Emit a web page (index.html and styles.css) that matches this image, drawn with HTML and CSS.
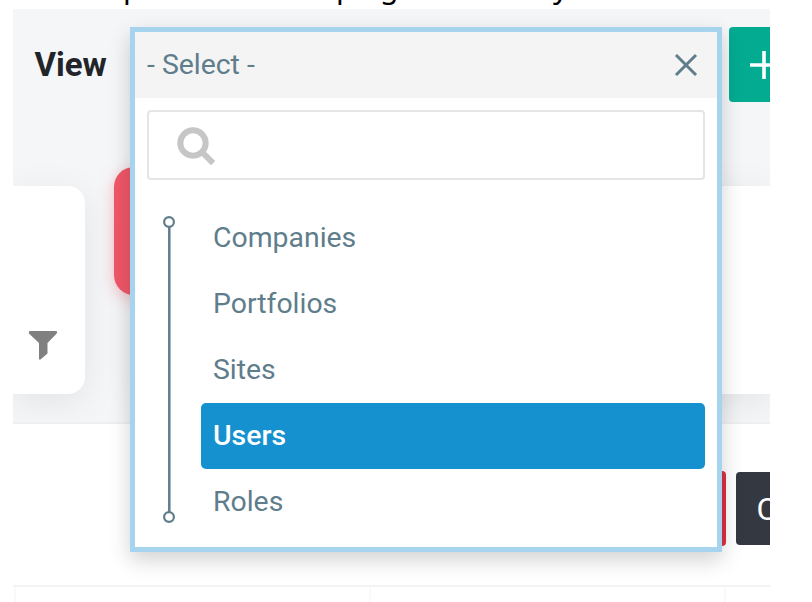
FILE: index.html
```html
<!DOCTYPE html>
<html lang="en">
<head>
<meta charset="utf-8">
<title>View</title>
<link rel="stylesheet" href="styles.css">
</head>
<body>
<p class="caption"><span class="c1">p</span><span class="c2">p</span><span class="c3">g</span><span class="c4">y</span></p>
<main class="app">
  <section class="dashboard">
    <header class="toolbar">
      <h1 class="title">View</h1>
      <button class="add" aria-label="Add"><svg width="28" height="28" viewBox="0 0 28 28"><path d="M14 0v28M0 14h28" stroke="#fff" stroke-width="3.6"/></svg></button>
    </header>
    <div class="cards">
      <div class="card filter-card">
        <svg class="funnel" width="30" height="31" viewBox="0 0 30 31"><path d="M1.500 1h27q1.500 1.200 0 2.700L19.500 13v10.500L12.500 29.500q-1.500 .6-1.500-1V13L1.200 3.700Q0 2 1.500 1z" fill="#808080"/></svg>
      </div>
      <div class="card main-card"><div class="accent"></div></div>
    </div>
  </section>
  <section class="content">
    <div class="actions"><button class="danger"></button><button class="dark">C</button></div>
    <div class="table"><div></div><div></div><div></div></div>
  </section>
  <div class="select">
    <div class="select-head"><span>- Select -</span>
      <svg width="24" height="24" viewBox="0 0 24 24"><path d="M2 2l20 20M22 2L2 22" stroke="#607d8b" stroke-width="3"/></svg>
    </div>
    <div class="select-body">
      <div class="search"><svg width="40" height="40" viewBox="0 0 40 40"><circle cx="17" cy="17" r="12.700" fill="none" stroke="#c6c6c6" stroke-width="6"/><path d="M26 26L35 35" stroke="#c6c6c6" stroke-width="6" stroke-linecap="square"/></svg></div>
      <div class="tree">
        <svg class="rail" width="14" height="310" viewBox="0 0 14 310"><g fill="#fff" stroke="#607d8b" stroke-width="2.200"><path d="M7.300 12v288" stroke-width="2.500"/><circle cx="7" cy="7" r="4.900"/><circle cx="7" cy="302" r="4.900"/></g></svg>
        <ul class="options"><li>Companies</li><li>Portfolios</li><li>Sites</li><li class="active">Users</li><li>Roles</li></ul>
      </div>
    </div>
  </div>
</main>
</body>
</html>
```
FILE: styles.css
```css
* { box-sizing: border-box; }
body { margin: 0; width: 812px; height: 602px; overflow: hidden; background: #fff; font-family: Roboto, sans-serif; }
button { border: 0; padding: 0; font: inherit; }
.caption { display: flex; margin: 0; height: 9px; padding-left: 123px; font: 30px/34px "Noto Sans", sans-serif; color: #000; }
.caption span { flex: none; margin-top: -30px; }
.c1 { width: 213px; }
.c2 { width: 44px; }
.c3 { width: 173px; }
.app { position: relative; margin-left: 13px; width: 757px; height: 593px; overflow: hidden; }
.dashboard { height: 415px; background: #f5f6f8; border-bottom: 2px solid #efeff0; overflow: hidden; }
.toolbar { display: flex; justify-content: space-between; height: 177px; padding: 18px 0 0 21.500px; }
.title { margin: 19px 0 0; font-size: 33px; line-height: 38px; font-weight: 700; color: #212529; }
.add { display: flex; align-items: center; width: 41.500px; height: 75px; padding-left: 21px; overflow: hidden; border-radius: 4px 0 0 4px; background: #03ab91; }
.add svg { flex: none; }
.cards { display: flex; gap: 55px; height: 208px; }
.card { background: #fff; box-shadow: 0 8px 36px rgba(0, 0, 0, .08); }
.filter-card { display: flex; align-items: flex-end; width: 72px; padding: 0 0 33.500px 14.500px; border-radius: 0 17px 17px 0; }
.main-card { position: relative; flex: 1; }
.accent { position: absolute; left: -26.500px; top: -19px; width: 128px; height: 128px; border-radius: 20px; background: #f05768; box-shadow: 0 4px 16px rgba(240, 87, 104, .35); }
.content { padding-top: 47.500px; }
.actions { display: flex; justify-content: flex-end; align-items: center; gap: 9.500px; height: 74px; }
.danger { width: 80px; height: 75px; border-radius: 4px; background: #dc3042; }
.dark { width: 34.500px; height: 73px; padding-left: 21px; overflow: hidden; border-radius: 4px 0 0 4px; background: #343841; color: #fff; font-size: 32px; text-align: left; }
.table { display: flex; margin-top: 39.500px; height: 20px; border-top: 2px solid #f3f3f3; padding-left: 1px; }
.table div { flex: none; width: 355px; border-left: 2px solid #f9f9f9; }
.select { position: absolute; left: 117px; top: 18px; width: 591.500px; height: 525px; border: 5px solid #a6d4ef; background: #fff; box-shadow: 0 8px 20px rgba(0, 0, 0, .18); color: #607d8b; font-size: 28.400px; }
.select-head { display: flex; align-items: center; justify-content: space-between; height: 66px; padding: 0 19px 0 12px; background: #f4f4f4; }
.select-head span { margin-top: -1px; }
.select-body { padding: 12px 12px 0; }
.search { display: flex; align-items: center; height: 70px; padding: 2px 0 0 27px; border: 2px solid #e5e5e5; border-radius: 4px; }
.tree { display: flex; margin-top: 25px; }
.rail { flex: none; margin: 10px 25px 0 15px; }
.options { flex: 1; margin: 0; padding: 0; list-style: none; }
.options li { height: 66px; line-height: 66px; padding-left: 12px; border-radius: 5px; }
.options .active { background: #1691cf; color: #fff; font-weight: 500; }
```
